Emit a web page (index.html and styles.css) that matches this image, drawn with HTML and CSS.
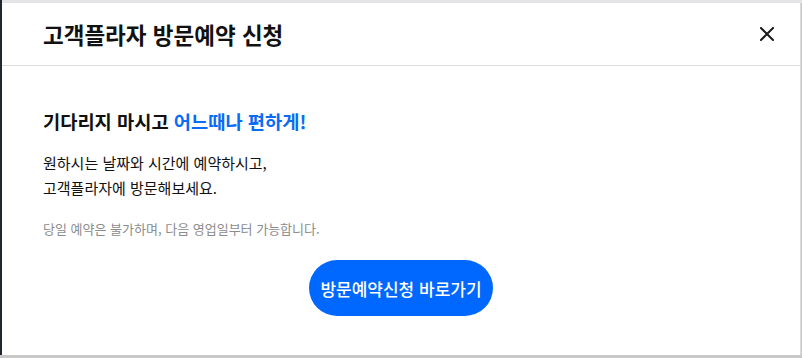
FILE: index.html
```html
<!DOCTYPE html>
<html lang="ko">
<head>
  <meta charset="UTF-8">
  <title>고객플라자 방문예약 신청</title>
  <meta name="viewport" content="width=device-width, initial-scale=1.0">
  <link rel="stylesheet" href="styles.css">
</head>
<body>

  <div class="backdrop">
    <div class="modal">
      <div class="modal-head">
        <h1>고객플라자 방문예약 신청</h1>
        <button class="close" aria-label="닫기">
          <svg width="14" height="14" viewBox="0 0 14 14">
            <path d="M1 1 L13 13 M13 1 L1 13" stroke="#1b1b1b" stroke-width="2" stroke-linecap="square"/>
          </svg>
        </button>
      </div>

      <div class="modal-body">
        <h2>기다리지 마시고 <span class="point">어느때나 편하게!</span></h2>
        <p class="desc">원하시는 날짜와 시간에 예약하시고,<br>고객플라자에 방문해보세요.</p>
        <p class="note">당일 예약은 불가하며, 다음 영업일부터 가능합니다.</p>
        <div class="actions">
          <a class="btn-go" href="#">방문예약신청 바로가기</a>
        </div>
      </div>
    </div>
  </div>

</body>
</html>
```

FILE: styles.css
```css
* { margin: 0; padding: 0; box-sizing: border-box; }
html, body { height: 100%; }
body {
  font-family: "Noto Sans CJK KR", "Noto Sans", sans-serif;
  background: #c8c8c8;
  overflow: hidden;
}

.backdrop {
  height: 355px;
  padding-top: 3px;
  padding-right: 1px;
  border-left: 2px solid #1f2733;
  background: linear-gradient(to bottom, #e4e4e6 0, #e4e4e6 3px, #c8c8c8 3px);
}

.modal {
  background: #fff;
  height: 352px;
  border-right: 1px solid #dcdcdc;
}

.modal-head {
  height: 63px;
  border-bottom: 1px solid #dedede;
  display: flex;
  align-items: center;
  justify-content: space-between;
  padding: 0 23px 0 41px;
}
.modal-head h1 {
  font-size: 22.5px;
  font-weight: 700;
  color: #111;
}
.close {
  background: none;
  border: none;
  width: 20px;
  height: 20px;
  display: flex;
  align-items: center;
  justify-content: center;
  cursor: pointer;
}

.modal-body { padding: 42px 41px 0; }
.modal-body h2 {
  font-size: 18.7px;
  line-height: 26px;
  font-weight: 700;
  color: #111;
}
.point { color: #0a6cf5; }

.desc {
  margin-top: 16px;
  font-size: 15px;
  line-height: 25px;
  color: #111;
}
.note {
  margin-top: 20px;
  font-size: 13px;
  line-height: 18px;
  color: #8c8c8c;
}

.actions {
  margin-top: 22px;
  display: flex;
  justify-content: center;
}
.btn-go {
  display: flex;
  align-items: center;
  justify-content: center;
  width: 184px;
  height: 56px;
  border-radius: 28px;
  background: #0068ff;
  color: #fff;
  font-size: 17px;
  font-weight: 500;
  text-decoration: none;
}
```
